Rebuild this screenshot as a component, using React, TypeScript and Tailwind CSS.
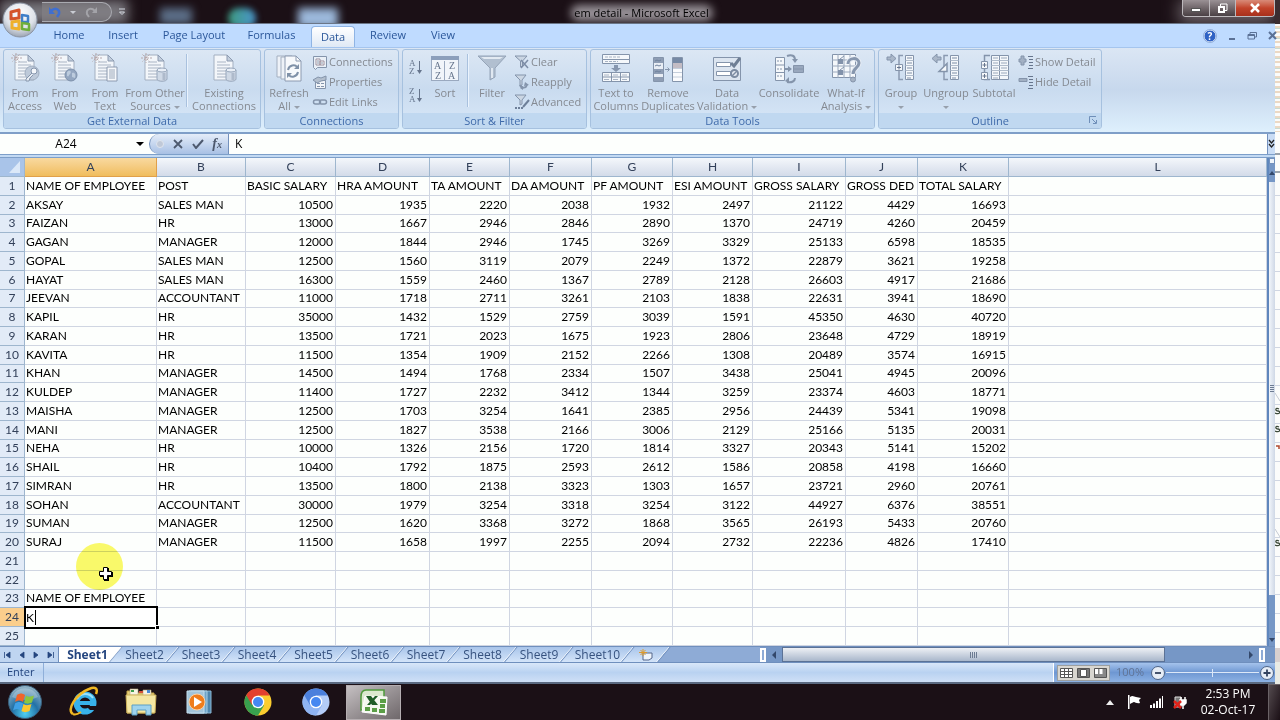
import type { ReactNode } from 'react';

const COLUMNS = [
  { id: 'A', width: 'w-[132px]' },
  { id: 'B', width: 'w-[89px]' },
  { id: 'C', width: 'w-[90px]' },
  { id: 'D', width: 'w-[94px]' },
  { id: 'E', width: 'w-[80px]' },
  { id: 'F', width: 'w-[82px]' },
  { id: 'G', width: 'w-[81px]' },
  { id: 'H', width: 'w-[80px]' },
  { id: 'I', width: 'w-[93px]' },
  { id: 'J', width: 'w-[72px]' },
  { id: 'K', width: 'w-[91px]' },
  { id: 'L', width: '' },
];

const ROWS: (string | number)[][] = [
  ['NAME OF EMPLOYEE', 'POST', 'BASIC SALARY', 'HRA AMOUNT', 'TA AMOUNT', 'DA AMOUNT', 'PF AMOUNT', 'ESI AMOUNT', 'GROSS SALARY', 'GROSS DED', 'TOTAL SALARY'],
  ['AKSAY', 'SALES MAN', 10500, 1935, 2220, 2038, 1932, 2497, 21122, 4429, 16693],
  ['FAIZAN', 'HR', 13000, 1667, 2946, 2846, 2890, 1370, 24719, 4260, 20459],
  ['GAGAN', 'MANAGER', 12000, 1844, 2946, 1745, 3269, 3329, 25133, 6598, 18535],
  ['GOPAL', 'SALES MAN', 12500, 1560, 3119, 2079, 2249, 1372, 22879, 3621, 19258],
  ['HAYAT', 'SALES MAN', 16300, 1559, 2460, 1367, 2789, 2128, 26603, 4917, 21686],
  ['JEEVAN', 'ACCOUNTANT', 11000, 1718, 2711, 3261, 2103, 1838, 22631, 3941, 18690],
  ['KAPIL', 'HR', 35000, 1432, 1529, 2759, 3039, 1591, 45350, 4630, 40720],
  ['KARAN', 'HR', 13500, 1721, 2023, 1675, 1923, 2806, 23648, 4729, 18919],
  ['KAVITA', 'HR', 11500, 1354, 1909, 2152, 2266, 1308, 20489, 3574, 16915],
  ['KHAN', 'MANAGER', 14500, 1494, 1768, 2334, 1507, 3438, 25041, 4945, 20096],
  ['KULDEP', 'MANAGER', 11400, 1727, 2232, 3412, 1344, 3259, 23374, 4603, 18771],
  ['MAISHA', 'MANAGER', 12500, 1703, 3254, 1641, 2385, 2956, 24439, 5341, 19098],
  ['MANI', 'MANAGER', 12500, 1827, 3538, 2166, 3006, 2129, 25166, 5135, 20031],
  ['NEHA', 'HR', 10000, 1326, 2156, 1720, 1814, 3327, 20343, 5141, 15202],
  ['SHAIL', 'HR', 10400, 1792, 1875, 2593, 2612, 1586, 20858, 4198, 16660],
  ['SIMRAN', 'HR', 13500, 1800, 2138, 3323, 1303, 1657, 23721, 2960, 20761],
  ['SOHAN', 'ACCOUNTANT', 30000, 1979, 3254, 3318, 3254, 3122, 44927, 6376, 38551],
  ['SUMAN', 'MANAGER', 12500, 1620, 3368, 3272, 1868, 3565, 26193, 5433, 20760],
  ['SURAJ', 'MANAGER', 11500, 1658, 1997, 2255, 2094, 2732, 22236, 4826, 17410],
  [],
  [],
  ['NAME OF EMPLOYEE'],
  ['K'],
  [],
];

const SHEETS = ['Sheet2', 'Sheet3', 'Sheet4', 'Sheet5', 'Sheet6', 'Sheet7', 'Sheet8', 'Sheet9'];

const INK = '#8494ab';

/* ---------- ribbon icons ---------- */

function Icon({ children, small }: { children: ReactNode; small?: boolean }) {
  return (
    <svg viewBox={small ? '0 0 16 16' : '0 0 32 32'} className={small ? 'w-4 h-4 shrink-0' : 'w-8 h-8 shrink-0'} fill="none" stroke={INK} strokeWidth="1">
      {children}
    </svg>
  );
}

function Sheet({ x = 6 }: { x?: number }) {
  return (
    <g>
      <path d={`M${x} 3h13l6 6v19h-19z`} fill="#f3f6fa" stroke="#a3afc0" />
      <path d={`M${x + 13} 3v6h6z`} fill="#c3cfde" stroke="#8c9ab0" />
      <path d={`M${x + 3} 10h9M${x + 3} 13h13M${x + 3} 16h13M${x + 3} 19h13M${x + 3} 22h13M${x + 3} 25h9`} stroke="#a9b4c4" />
    </g>
  );
}

function Spark() {
  return <path d="M7 1v10M2 6h11M3.500 2.500l7 7M10.500 2.500l-7 7" stroke="#b8a9ac" strokeDasharray="2 1" />;
}

function Cylinder() {
  return (
    <g>
      <path d="M18 18v9c0 3 10 3 10 0v-9" fill="#cfd9e6" stroke="#98a7bc" />
      <ellipse cx="23" cy="18" rx="5" ry="2" fill="#e9eff7" stroke="#98a7bc" />
      <path d="M25 21v7" stroke="#aebacb" strokeWidth="3" />
    </g>
  );
}

const AccessIcon = () => (
  <Icon>
    <Sheet /><Spark />
    <circle cx="23" cy="21" r="7" fill="#bdc9d9" stroke="#a0aec1" />
    <circle cx="25" cy="19" r="3" fill="#f4f7fb" stroke="#8595ac" />
    <path d="M23 21l-6 6v2h3l1-3 3-3" fill="#e8edf4" stroke="#8595ac" />
  </Icon>
);

const WebIcon = () => (
  <Icon>
    <Sheet /><Spark />
    <circle cx="22" cy="23" r="6" fill="#93a6c0" stroke="#7e91ac" />
    <path d="M18 20c3-3 5 0 3 2s-1 3-3 2zM23 21c3-1 4 2 3 5l-3-1z" fill="#bccbdd" stroke="none" />
  </Icon>
);

const TextIcon = () => (
  <Icon>
    <Sheet /><Spark />
    <path d="M18 15h10v14h-10z" fill="#f6f8fb" stroke="#8c9ab0" />
    <path d="M20 18h6M20 20h6M20 22h6M20 24h6M20 26h6" stroke="#9ba8ba" />
  </Icon>
);

const OtherIcon = () => <Icon><Sheet /><Spark /><Cylinder /></Icon>;
const ExistingIcon = () => <Icon><Sheet /><Cylinder /></Icon>;

const RefreshIcon = () => (
  <Icon>
    <path d="M4 4h15v21H4z" fill="#eef2f8" stroke="#a3afc0" />
    <path d="M8 5h15v22H8z" fill="#eef2f8" stroke="#a3afc0" />
    <path d="M12 4h11l5 5v20H12z" fill="#f7f9fc" stroke="#8c9ab0" />
    <path d="M23 4v5h5" stroke="#8c9ab0" />
    <path d="M15 18c1-5 7-6 9-3M25 20c-1 5-7 6-9 3" stroke="#7f91a8" strokeWidth="2" />
    <path d="M26 12v5h-5zM14 26v-5h5z" fill="#7f91a8" stroke="none" />
  </Icon>
);

const AzIcon = ({ top, bottom }: { top: string; bottom: string }) => (
  <svg viewBox="0 0 16 18" className="w-4 h-[18px]" fontFamily="Liberation Serif, serif" fontSize="9" fill="#66758d">
    <text x="1" y="8">{top}</text>
    <text x="1" y="16">{bottom}</text>
    <path d="M11.500 3v12" stroke="#66758d" />
    <path d="M9 12h5l-2.500 4z" />
  </svg>
);

const SortIcon = () => (
  <svg viewBox="0 0 32 32" className="w-8 h-8" fontFamily="Liberation Serif, serif" fontSize="10" fill="#66758d">
    <rect x="2.500" y="4.500" width="27" height="24" fill="#f1f5fa" stroke="#9aa9bf" />
    <rect x="2" y="4" width="28" height="4" fill="#8c9fbb" />
    <path d="M15.500 9v19" stroke="#9aa9bf" />
    <text x="5" y="17">A</text><text x="6" y="27">Z</text>
    <text x="20" y="17">Z</text><text x="19" y="27">A</text>
  </svg>
);

const FilterIcon = () => (
  <Icon>
    <path d="M2 4h28L19 16v9l-5 3V16z" fill="#b1bfd0" stroke="#95a4b8" />
    <path d="M5 5h22l-3 2H8z" fill="#e3eaf2" stroke="none" />
    <path d="M16 16v10" stroke="#e0e8f1" strokeWidth="2" />
  </Icon>
);

const ConnectionsIcon = () => (
  <Icon small>
    <path d="M1.500 2.500h13v11h-9l-2 2-2-2z" fill="#eaf0f7" />
    <path d="M4 5h4v6H4zM8 7h4v4H8z" fill="#fff" stroke="#9b8f9c" />
    <path d="M5 7h2M5 9h2M9 9h2" />
  </Icon>
);

const PropertiesIcon = () => (
  <Icon small>
    <path d="M3.500 6.500h10v8h-10z" fill="#f2f5f9" />
    <path d="M5 9.500h3M5 12.500h3M9 9.500h3M9 12.500h3" />
    <path d="M1 6l5-3 3 1 5-2v4l-5 1-4 2z" fill="#b3bfce" />
  </Icon>
);

const LinksIcon = () => (
  <Icon small>
    <rect x="1.500" y="6" width="7" height="4" rx="2" strokeWidth="1.500" />
    <rect x="7.500" y="6" width="7" height="4" rx="2" strokeWidth="1.500" />
  </Icon>
);

const ClearIcon = () => (
  <Icon small>
    <path d="M1 2h12L8.500 7v5l-2 1V7z" fill="#cbd6e3" />
    <path d="M7 6l7 8M14 6l-7 8" stroke="#7c8ca5" strokeWidth="1.500" />
  </Icon>
);

const ReapplyIcon = () => (
  <Icon small>
    <path d="M1 1h11L8 6v5l-2 1V6z" fill="#cbd6e3" />
    <path d="M6 11c2 4 6 3 7 0" strokeWidth="2" />
    <path d="M11 8l4 3-5 1zM9 12v4l-3-2z" fill={INK} stroke="none" />
  </Icon>
);

const AdvancedIcon = () => (
  <Icon small>
    <path d="M1 1h11L8 6v4l-2 1V6z" fill="#cbd6e3" />
    <path d="M1 14h8" stroke="#6d7f99" strokeWidth="2" strokeDasharray="2 1" />
    <path d="M9 13l6-7" stroke="#6d7f99" strokeWidth="2" />
  </Icon>
);

const TextToColumnsIcon = () => (
  <Icon>
    <path d="M2.500 2.500h27v5h-27zM2.500 7.500h27v4h-27z" fill="#f5f8fb" />
    <path d="M5 5h16M5 9.500h13" stroke="#a9b4c4" strokeDasharray="3 1" />
    <path d="M14 13h4v3h3l-5 4-5-4h3z" fill="#8797af" stroke="none" />
    <path d="M2.500 20.500h27v9h-27zM2.500 25h27M11.500 20.500v9M20.500 20.500v9" fill="#f5f8fb" />
    <path d="M4 23h5M13 23h5M22 23h5M4 27.500h5M13 27.500h5M22 27.500h5" stroke="#a9b4c4" />
  </Icon>
);

const RemoveDuplicatesIcon = () => (
  <Icon>
    <path d="M1.500 5.500h10v24h-10z" fill="#e8edf4" />
    <path d="M2 6h9v5H2zM2 17h9v5H2zM2 25h9v4H2z" fill="#8e9db4" stroke="none" />
    <path d="M3 9l2-1 2 1 2-1M3 14l2-1 2 1 2-1M3 20l2-1 2 1 2-1" stroke="#6f819c" />
    <path d="M13 17.500h4M15.500 15.500l2 2-2 2" />
    <path d="M20.500 5.500h10v24h-10z" fill="#fafbfd" />
    <path d="M21 6h9v5h-9z" fill="#7689a5" stroke="none" />
    <path d="M21 11h9v5h-9z" fill="#c3bcc4" stroke="none" />
    <path d="M21 16.500h9M21 20.500h9M21 25h9" stroke="#c4cedb" />
  </Icon>
);

const ValidationIcon = () => (
  <Icon>
    <path d="M2.500 5.500h27v23h-27z" fill="#dce5f0" />
    <path d="M5.500 10.500h14v4h-14zM5.500 19.500h14v4h-14z" fill="#fff" />
    <path d="M20 11l3 3 6-8" stroke="#6f7f95" strokeWidth="3" />
    <circle cx="23.500" cy="21.500" r="3.500" stroke="#7d8ca2" strokeWidth="2" fill="#e4e9f1" />
    <path d="M21 24l5-5" stroke="#7d8ca2" strokeWidth="1.500" />
  </Icon>
);

const ConsolidateIcon = () => (
  <Icon>
    <path d="M2.500 5.500h9v23h-9zM2.500 13h9M2.500 20.500h9" fill="#f5f8fb" />
    <path d="M4 9h6M4 17h6M4 24h6" strokeDasharray="2 1" />
    <path d="M14 4c5-2 8 0 8 4M14 30c5 1 8-1 8-4" strokeWidth="2" />
    <path d="M19 7h6l-3 4zM12 29l4-4v6z" fill={INK} stroke="none" />
    <path d="M12 16h3v-2l4 3-4 3v-2h-3z" fill={INK} stroke="none" />
    <path d="M20.500 13.500h10v7h-10zM20.500 17h10" fill="#98a7bd" />
  </Icon>
);

const WhatIfIcon = () => (
  <Icon>
    <path d="M2.500 2.500h23v23h-23z" fill="#f5f8fb" />
    <path d="M8 2v24M14 2v24M20 2v24M2 8h24M2 14h24M2 20h24" stroke="#9aa8bc" />
    <path d="M8 7h5v5H8zM8 18h5v5H8z" fill="#8292aa" stroke="none" />
    <path d="M10 7l4-3M10 18l4-3" />
    <path d="M18 12c0-7 11-7 11-1 0 5-6 5-6 11" stroke="#e5ebf3" strokeWidth="5" />
    <path d="M18 12c0-7 11-7 11-1 0 5-6 5-6 11" stroke="#8797ae" strokeWidth="3" />
    <circle cx="23" cy="27.500" r="2.500" fill="#a5b2c4" />
  </Icon>
);

function OutlineRows() {
  return (
    <g>
      <path d="M20.500 3.500h8v24h-8z" fill="#f5f8fb" />
      <path d="M20.500 8.500h8M20.500 13.500h8M20.500 18.500h8M20.500 23.500h8" stroke="#b0bccb" />
      <path d="M22 6h5M22 11h5M22 16h5M22 21h5M22 26h4" stroke="#7d8da5" />
      <path d="M18 3.500h-4v24h4" stroke="#8b9ab1" strokeWidth="1.500" />
    </g>
  );
}

const GroupIcon = () => (
  <Icon>
    <OutlineRows />
    <path d="M2 5h4V2l5 4.500L6 11V8H2z" fill="#aab7c8" />
    <path d="M10.500 12.500h7v6h-7z" fill="#f5f8fb" />
    <path d="M12 15.500h4M14 13.500v4" stroke="#66758d" />
  </Icon>
);

const UngroupIcon = () => (
  <Icon>
    <OutlineRows />
    <path d="M11 5H7V2L2 6.500 7 11V8h4z" fill="#aab7c8" />
    <path d="M9 19.500h8v-8z" fill="#f5f8fb" strokeWidth="1.500" />
  </Icon>
);

const SubtotalIcon = () => (
  <Icon>
    <path d="M13.500 3.500h17v24h-17zM21.500 3.500v24" fill="#f5f8fb" />
    <path d="M13.500 8.500h17M13.500 13.500h17M13.500 18.500h17M13.500 23.500h17" stroke="#b0bccb" />
    <path d="M15 6h5M15 11h5M15 16h5M15 21h5M15 26h5M23 6h6M23 11h6M23 16h6M23 21h6" stroke="#9aa8bb" />
    <path d="M12 3.500H6.500v24H12" strokeWidth="1.500" />
    <path d="M3.500 9.500h6v7h-6zM3.500 20.500h6v7h-6z" fill="#f5f8fb" />
    <path d="M4.500 13h4M6.500 11v4M4.500 24h4M6.500 22v4" stroke="#66758d" />
  </Icon>
);

const DetailIcon = ({ plus }: { plus?: boolean }) => (
  <Icon small>
    {plus ? <path d="M1 5h2V2h3v3h2v3H6v3H3V8H1z" fill="#a2b0c3" /> : <path d="M1 4.500h8v3H1z" fill="#a2b0c3" />}
    <path d="M10 2.500h5M11 5.500h4M11 8.500h4M11 11.500h4M10 14.500h5" stroke="#66758d" />
  </Icon>
);

/* ---------- ribbon parts ---------- */

const Arrow = () => <span className="inline-block border-x-3 border-t-3 border-x-transparent border-t-[#97a0ac] align-middle" />;

type BigProps = { icon: ReactNode; lines: string[]; width: string; arrow?: boolean };

function BigButton({ icon, lines, width, arrow }: BigProps) {
  return (
    <button className={`${width} flex flex-col items-center shrink-0 whitespace-nowrap`}>
      {icon}
      <span className="mt-0.5 text-center leading-[13px]">
        {lines.map((line, i) => (
          <span key={line} className="block">
            {line}
            {arrow && lines.length > 1 && i === lines.length - 1 && <> <Arrow /></>}
          </span>
        ))}
        {arrow && lines.length === 1 && <span className="block"><Arrow /></span>}
      </span>
    </button>
  );
}

function SmallButton({ icon, label }: { icon: ReactNode; label: string }) {
  return (
    <button className="flex items-center gap-px h-5 whitespace-nowrap">
      {icon}
      <span>{label}</span>
    </button>
  );
}

const Divider = () => <span className="w-0.5 h-[53px] mt-0.5 mx-px border-l border-[#a9c1de] bg-[#eaf3fd] shrink-0" />;

function Group({ title, children, width, launcher }: { title: string; children: ReactNode; width: string; launcher?: boolean }) {
  return (
    <section className={`${width} relative flex flex-col shrink-0 h-20 rounded-[3px] border border-[#a6c1df] bg-linear-to-b from-[#dce7f4] via-[#c9dbef] to-[#d9e8f8] overflow-hidden`}>
      <div className="flex flex-1 pl-px pt-0.5">{children}</div>
      <h2 className="h-[15px] bg-[#c0d8f0] text-[#3e6aaa] text-center leading-[15px]">{title}</h2>
      {launcher && (
        <button aria-label="Outline settings" className="absolute right-1 bottom-1">
          <svg viewBox="0 0 8 8" className="w-2 h-2" fill="none" stroke="#6f8fb9">
            <path d="M.5 7V.5H7M3 3l4 4M7.500 4v3.500H4" />
          </svg>
        </button>
      )}
    </section>
  );
}

function Ribbon() {
  return (
    <div className="flex gap-[3px] h-[87px] pl-[3px] pt-px text-[11px] text-[#858a92] border-t border-[#a5c5ee] border-b-2 border-b-[#7f9fc8] bg-linear-to-b from-[#dbe6f4] via-[#c7d8ed] to-[#def0fd] overflow-hidden">
      <Group title="Get External Data" width="w-[258px]">
        <BigButton icon={<AccessIcon />} lines={['From', 'Access']} width="w-10" />
        <BigButton icon={<WebIcon />} lines={['From', 'Web']} width="w-10" />
        <BigButton icon={<TextIcon />} lines={['From', 'Text']} width="w-10" />
        <BigButton icon={<OtherIcon />} lines={['From Other', 'Sources']} width="w-[60px]" arrow />
        <Divider />
        <BigButton icon={<ExistingIcon />} lines={['Existing', 'Connections']} width="w-[70px]" />
      </Group>
      <Group title="Connections" width="w-[135px]">
        <BigButton icon={<RefreshIcon />} lines={['Refresh', 'All']} width="w-[46px]" arrow />
        <div className="flex flex-col">
          <SmallButton icon={<ConnectionsIcon />} label="Connections" />
          <SmallButton icon={<PropertiesIcon />} label="Properties" />
          <SmallButton icon={<LinksIcon />} label="Edit Links" />
        </div>
      </Group>
      <Group title="Sort & Filter" width="w-[185px]">
        <div className="flex flex-col gap-2.5 w-5 pl-1 pt-1.5">
          <button aria-label="Sort A to Z"><AzIcon top="A" bottom="Z" /></button>
          <button aria-label="Sort Z to A"><AzIcon top="Z" bottom="A" /></button>
        </div>
        <BigButton icon={<SortIcon />} lines={['Sort']} width="w-[42px]" />
        <Divider />
        <BigButton icon={<FilterIcon />} lines={['Filter']} width="w-[44px]" />
        <div className="flex flex-col">
          <SmallButton icon={<ClearIcon />} label="Clear" />
          <SmallButton icon={<ReapplyIcon />} label="Reapply" />
          <SmallButton icon={<AdvancedIcon />} label="Advanced" />
        </div>
      </Group>
      <Group title="Data Tools" width="w-[285px]">
        <BigButton icon={<TextToColumnsIcon />} lines={['Text to', 'Columns']} width="w-12" />
        <BigButton icon={<RemoveDuplicatesIcon />} lines={['Remove', 'Duplicates']} width="w-14" />
        <BigButton icon={<ValidationIcon />} lines={['Data', 'Validation']} width="w-[62px]" arrow />
        <BigButton icon={<ConsolidateIcon />} lines={['Consolidate']} width="w-[62px]" />
        <BigButton icon={<WhatIfIcon />} lines={['What-If', 'Analysis']} width="w-[52px]" arrow />
      </Group>
      <Group title="Outline" width="w-[224px]" launcher>
        <BigButton icon={<GroupIcon />} lines={['Group']} width="w-[42px]" arrow />
        <BigButton icon={<UngroupIcon />} lines={['Ungroup']} width="w-12" arrow />
        <BigButton icon={<SubtotalIcon />} lines={['Subtotal']} width="w-12" />
        <div className="flex flex-col">
          <SmallButton icon={<DetailIcon plus />} label="Show Detail" />
          <SmallButton icon={<DetailIcon />} label="Hide Detail" />
        </div>
      </Group>
    </div>
  );
}

/* ---------- window chrome ---------- */

function OfficeButton() {
  return (
    <button aria-label="Office" className="absolute left-[2px] top-[2px] z-10">
      <svg viewBox="0 0 36 36" className="w-9 h-9">
        <defs>
          <radialGradient id="orb" cx=".5" cy=".3" r=".75">
            <stop offset="0" stopColor="#ffffff" />
            <stop offset=".6" stopColor="#dde1e8" />
            <stop offset="1" stopColor="#8e98a8" />
          </radialGradient>
        </defs>
        <circle cx="18" cy="18" r="17" fill="url(#orb)" stroke="#8b94a3" />
        <g fill="none" strokeWidth="3" strokeLinejoin="round">
          <path d="M9 10l8-2v8l-8 1z" stroke="#d4542a" />
          <path d="M20 13l6 1v6h-6z" stroke="#3f7fc9" strokeWidth="2.500" />
          <path d="M10 20l7-1v8l-7-1z" stroke="#eeb02b" />
          <path d="M20 21l7 1v6l-7-1z" stroke="#6fae3b" strokeWidth="2.500" />
        </g>
      </svg>
    </button>
  );
}

function TitleBar() {
  return (
    <header className="relative flex items-start h-6 border-b border-[#6b7687] bg-[#1b1016] overflow-hidden">
      <div className="absolute inset-0 pointer-events-none">
        <span className="absolute left-0 top-0 w-32 h-6 bg-[#77757b] blur-[6px]" />
        <span className="absolute left-[160px] top-2 w-8 h-4 bg-[#5c6f88] blur-xs" />
        <span className="absolute left-[228px] top-2 w-7 h-5 rounded-full bg-linear-to-r from-[#3f9b7c] to-[#4b93cc] blur-[3px]" />
        <span className="absolute left-[298px] top-2 w-10 h-5 bg-[#9cb9dc] blur-xs" />
        <span className="absolute right-0 top-0 w-24 h-6 bg-[#6b6268] blur-[8px]" />
      </div>
      <div className="relative flex items-center gap-2 h-5 w-[70px] ml-[42px] mt-0.5 pl-1.5 rounded-r-full border border-[#a9aab0] border-l-0 bg-[#858489]/60">
        <button aria-label="Undo">
          <svg viewBox="0 0 14 12" className="w-3.5 h-3" fill="none">
            <path d="M3 5c4-4 9-2 8 3l-2 3" stroke="#3f6fd0" strokeWidth="2.500" />
            <path d="M1 1v7h6z" fill="#3f6fd0" />
          </svg>
        </button>
        <span className="border-x-3 border-t-3 border-x-transparent border-t-[#c9ccd3]" />
        <button aria-label="Redo">
          <svg viewBox="0 0 14 12" className="w-3.5 h-3" fill="none">
            <path d="M11 5C7 1 2 3 3 8l2 3" stroke="#a3a3a8" strokeWidth="2" />
            <path d="M13 1v6H8z" fill="#a3a3a8" />
          </svg>
        </button>
      </div>
      <button aria-label="Customize quick access" className="relative ml-1.5 mt-2">
        <svg viewBox="0 0 8 8" className="w-2 h-2"><path d="M1 1h6M1.500 4h5L4 6.500z" stroke="#d5dae2" fill="none" /></svg>
      </button>
      <h1 className="absolute left-1/2 top-1 ml-1 -translate-x-1/2 px-1 text-[11px] leading-[18px] text-black whitespace-nowrap">
        <span className="absolute inset-x-0 inset-y-px rounded-full bg-[#979197] blur-xs" />
        <span className="relative">em detail - Microsoft Excel</span>
      </h1>
      <div className="relative flex h-[17px] ml-auto rounded-b-sm border border-t-0 border-[#bdb9bd] overflow-hidden">
        <button aria-label="Minimize" className="w-[26px] flex items-center justify-center bg-linear-to-b from-[#9a9195] to-[#4a4044]">
          <span className="w-2.5 h-1 mt-1 bg-white border border-[#555]" />
        </button>
        <button aria-label="Restore" className="w-[26px] flex items-center justify-center border-l border-[#bdb9bd] bg-linear-to-b from-[#9a9195] to-[#4a4044]">
          <svg viewBox="0 0 11 11" className="w-[11px] h-[11px]" fill="none" stroke="#fff"><path d="M3.500 3V1h6.500v6.500H8" /><path d="M2 4h5v5H2z" strokeWidth="2" /></svg>
        </button>
        <button aria-label="Close" className="w-[39px] flex items-center justify-center border-l border-[#bdb9bd] bg-linear-to-b from-[#d88a78] via-[#c2432a] to-[#a8301c]">
          <svg viewBox="0 0 12 10" className="w-3 h-2.5"><path d="M2 1l8 8M10 1L2 9" stroke="#fff" strokeWidth="2.500" /></svg>
        </button>
      </div>
    </header>
  );
}

function RibbonTabs() {
  return (
    <nav className="flex h-[23px] pl-12 text-[11px] font-medium text-[#2b579a] bg-[#bfdbff]">
      <button className="w-[42px]">Home</button>
      <button className="w-[66px]">Insert</button>
      <button className="w-[76px]">Page Layout</button>
      <button className="w-[79px]">Formulas</button>
      <button className="w-11 mt-0.5 rounded-t border border-b-0 border-[#8fb4e4] bg-linear-to-b from-white to-[#dfe9f5]">Data</button>
      <button className="w-[66px]">Review</button>
      <button className="w-11">View</button>
      <div className="flex items-center gap-2.5 ml-auto -mr-0.5 text-[#5b7196]">
        <button aria-label="Help">
          <svg viewBox="0 0 14 14" className="w-3.5 h-3.5">
            <circle cx="7" cy="7" r="6" fill="#2f62c4" stroke="#dfe9f8" />
            <circle cx="7" cy="7" r="6.500" fill="none" stroke="#6f8fc6" strokeWidth=".6" />
            <text x="7" y="10.500" fontSize="10" fontWeight="700" fill="#fff" textAnchor="middle">?</text>
          </svg>
        </button>
        <button aria-label="Minimize workbook"><svg viewBox="0 0 10 10" className="w-2.5 h-2.5"><path d="M2 8h6" stroke="#5b7196" strokeWidth="2" /></svg></button>
        <button aria-label="Restore workbook"><svg viewBox="0 0 10 10" className="w-2.5 h-2.5" fill="none" stroke="#5b7196"><path d="M3 3V1.500h6.500V6H8" /><path d="M1 3.500h6.500V8H1zM1 4.500h6" /></svg></button>
        <button aria-label="Close workbook"><svg viewBox="0 0 10 10" className="w-2.5 h-2.5"><path d="M2 1l7 7M9 1L2 8" stroke="#5b7196" strokeWidth="2" /></svg></button>
      </div>
    </nav>
  );
}

function FormulaBar() {
  return (
    <div className="flex h-[21px] mb-0.5 border-b border-[#7d9fc9] bg-[#fdfffd] text-xs">
      <div className="flex items-center w-[149px]">
        <input aria-label="Name Box" defaultValue="A24" className="w-[132px] min-w-0 text-center bg-transparent outline-none" />
        <button aria-label="Name list" className="ml-1 border-x-4 border-t-4 border-x-transparent border-t-black" />
      </div>
      <div className="flex items-center justify-between w-20 pl-1.5 pr-1.5 rounded-l-full border-l border-r border-[#7391bd] bg-linear-to-b from-[#e4edf9] to-[#a8c0e4]">
        <span className="w-2 h-2 rounded-full bg-[#c0c9d8] border border-[#dfe5ee]" />
        <button aria-label="Cancel"><svg viewBox="0 0 10 10" className="w-2.5 h-2.5"><path d="M1 1l8 8M9 1L1 9" stroke="#4d596e" strokeWidth="1.800" /></svg></button>
        <button aria-label="Enter"><svg viewBox="0 0 12 10" className="w-3 h-2.5"><path d="M1 5l3 4 7-8" fill="none" stroke="#4d596e" strokeWidth="2" /></svg></button>
        <button aria-label="Insert Function" className="font-[Liberation_Serif,serif] italic font-bold text-sm leading-4 text-[#4d596e]">f<span className="text-[10px]">x</span></button>
      </div>
      <input aria-label="Formula" defaultValue="K" className="flex-1 min-w-0 pl-1.5 bg-transparent outline-none" />
      <button aria-label="Expand formula bar" className="w-2 flex items-center justify-center border-l border-[#7391bd] bg-[#c9dcf5]">
        <svg viewBox="0 0 7 10" className="w-[7px] h-2.5" fill="none" stroke="#222" strokeWidth="1.300"><path d="M1 1l2.500 3L6 1M1 5l2.500 3L6 5" /></svg>
      </button>
    </div>
  );
}

/* ---------- worksheet ---------- */

function Cell({ value, row, col }: { value?: string | number; row: number; col: number }) {
  const active = row === 23 && col === 0;
  if (active) {
    return (
      <td className="relative p-0 bg-white">
        <input aria-label="A24" defaultValue={value} className="absolute inset-0 w-full pl-px bg-transparent outline-none" />
        <span className="absolute left-2.5 top-0.5 bottom-0.5 w-px bg-black" />
        <span className="absolute -left-px -right-px -top-1 bottom-0 translate-y-0.5 border-2 border-black pointer-events-none" />
        <span className="absolute -right-0.5 -bottom-0.5 w-1 h-1 bg-black border-t border-l border-white" />
      </td>
    );
  }
  return (
    <td className={`py-0 pl-px pr-0.5 border-r border-b border-[#d0d6e2] whitespace-nowrap ${typeof value === 'number' ? 'text-right' : ''}`}>
      {value}
    </td>
  );
}

function headerStyle(id: string) {
  if (id === 'A') return 'border-[#e0a04a] bg-linear-to-b from-[#f9d99f] to-[#f0bd5c]';
  return 'border-[#9eb6ce] bg-linear-to-b from-[#f4f7fb] to-[#d3dbe9]';
}

function Worksheet() {
  return (
    <div className="relative flex-1 min-h-0 flex border-t border-[#7d9fc9]">
      <div className="flex-1 min-w-0 h-full">
        <table className="w-full h-full table-fixed border-separate border-spacing-0 bg-[#fdfffd] font-[Lato,sans-serif] text-xs leading-4 text-black">
          <colgroup>
            <col className="w-[25px]" />
            {COLUMNS.map((c) => <col key={c.id} className={c.width} />)}
          </colgroup>
          <thead>
            <tr>
              <th aria-label="Select all" className="p-0 border-r border-b border-[#9eb6ce] bg-[#a9c4e9]">
                <svg viewBox="0 0 24 18" className="w-full h-[18px]"><path d="M20 3v12H9z" fill="#dbe8f8" /></svg>
              </th>
              {COLUMNS.map((c) => (
                <th
                  key={c.id}
                  scope="col"
                  className={`py-0 pr-0 font-normal text-[#33415a] border-r border-b ${c.id === 'L' ? 'pl-10' : 'pl-0'} ${headerStyle(c.id)}`}
                >
                  {c.id}
                </th>
              ))}
            </tr>
          </thead>
          <tbody>
            {ROWS.map((row, r) => (
              <tr key={r}>
                <th scope="row" className={`p-0 font-normal text-center text-[#33415a] border-r border-b border-[#9eb6ce] ${r === 23 ? 'bg-[#fbce8c]' : 'bg-[#e2ebf7]'}`}>
                  {r + 1}
                </th>
                {COLUMNS.map((c, i) => <Cell key={c.id} value={row[i]} row={r} col={i} />)}
              </tr>
            ))}
          </tbody>
        </table>
      </div>
      <div className="w-2 flex flex-col border-l-2 border-[#5f87bd] bg-[#7697c6]">
        <span className="h-1.5 bg-[#eef4fb] border border-[#7391bd]" />
        <span className="h-[18px] flex items-center"><span className="border-x-3 border-b-4 border-x-transparent border-b-[#33486b]" /></span>
        <span className="flex-1 flex flex-col items-center justify-center gap-px bg-linear-to-r from-[#f2f6fb] to-[#cfd8e6]">
          <i className="w-1 h-px bg-[#6c7b92]" /><i className="w-1 h-px bg-[#6c7b92]" /><i className="w-1 h-px bg-[#6c7b92]" /><i className="w-1 h-px bg-[#6c7b92]" />
        </span>
        <span className="h-[51px] flex items-end pb-1"><span className="border-x-3 border-t-4 border-x-transparent border-t-[#33486b]" /></span>
      </div>
      {/* pointer highlight */}
      <div className="absolute left-[76px] top-[385px] w-[47px] h-[47px] rounded-full bg-[#fbf96b] mix-blend-multiply pointer-events-none" />
      <svg viewBox="0 0 16 16" className="absolute left-[98px] top-[408px] w-4 h-4 pointer-events-none">
        <path d="M6 2h5v4h4v5h-4v4H6v-4H2V6h4z" fill="#000" />
        <path d="M5.500 1.500h4v4h4v4h-4v4h-4v-4h-4v-4h4z" fill="#fff" stroke="#000" />
      </svg>
    </div>
  );
}

function SheetTab({ name, width }: { name: ReactNode; width: string }) {
  return (
    <button className={`${width} relative h-4`}>
      <span className="absolute inset-0 -skew-x-[40deg] border-r border-[#6f8fbd] bg-linear-to-b from-[#a9c5ea] to-[#d6e6fa] shadow-[inset_-1px_0_#fff]" />
      <span className="relative flex items-center justify-center h-4">{name}</span>
    </button>
  );
}

function SheetBar() {
  return (
    <div className="flex items-center h-[17px] text-xs text-[#36527f] border-y border-[#6f8fbd] bg-[#8eabd6] overflow-hidden">
      <div className="relative z-10 flex items-center justify-around w-[59px] h-full border-r border-[#6f8fbd] bg-[#bfd5f1]">
        {['M1.500 1v6M7 1v6L3 4z', 'M6 1v6L2 4z', 'M2 1v6l4-3z', 'M6.500 1v6M1 1v6l4-3z'].map((d, i) => (
          <button key={d} aria-label={['First sheet', 'Previous sheet', 'Next sheet', 'Last sheet'][i]}>
            <svg viewBox="0 0 8 8" className="w-2 h-2"><path d={d} fill="#24457f" stroke="#24457f" strokeWidth=".8" /></svg>
          </button>
        ))}
      </div>
      <button className="relative w-[57px] h-4 font-bold text-[#24457f]">
        <span className="absolute inset-y-0 right-0 -left-4 -skew-x-[40deg] border-r border-[#6f8fbd] bg-white" />
        <span className="relative">Sheet1</span>
      </button>
      {SHEETS.map((s, i) => <SheetTab key={s} name={s} width={i % 3 ? 'w-14' : 'w-[57px]'} />)}
      <SheetTab name="Sheet10" width="w-[61px]" />
      <SheetTab
        width="w-9"
        name={
          <svg viewBox="0 0 15 12" className="w-[15px] h-3" fill="none">
            <path d="M4 4h9v5l-3 2H4z" fill="#eef4fb" stroke="#54678a" />
            <path d="M4 0v7M0 3.500h8M1.500 1l5 5M6.500 1l-5 5" stroke="#dd9a2c" />
          </svg>
        }
      />
      <div className="flex flex-1 items-center h-full ml-[96px] bg-[#7697c6]">
        <span className="w-1.5 h-3.5 border-2 border-white bg-[#8eabd6]" />
        <span className="ml-1.5 mr-1.5 border-y-4 border-r-4 border-y-transparent border-r-[#33486b]" />
        <span className="flex items-center justify-center gap-px w-[383px] h-full border border-[#5b7296] bg-linear-to-b from-[#eef1f5] to-[#a9b7cb]">
          <i className="w-px h-1.5 bg-[#6c7b92]" /><i className="w-px h-1.5 bg-[#6c7b92]" /><i className="w-px h-1.5 bg-[#6c7b92]" /><i className="w-px h-1.5 bg-[#6c7b92]" />
        </span>
        <span className="ml-auto border-y-4 border-l-4 border-y-transparent border-l-[#33486b]" />
        <span className="mr-2.5 ml-1.5 w-1.5 h-3.5 border-2 border-white bg-[#8eabd6]" />
      </div>
    </div>
  );
}

function ZoomButton({ label, d }: { label: string; d: string }) {
  return (
    <button aria-label={label} className="shrink-0">
      <svg viewBox="0 0 16 16" className="w-4 h-4"><circle cx="8" cy="8" r="6.500" fill="#e6edf6" stroke="#4d6488" /><path d={d} stroke="#33435f" strokeWidth="1.800" /></svg>
    </button>
  );
}

function StatusBar() {
  return (
    <footer className="flex items-stretch h-[21px] text-[11px] text-[#24457f] border-b-2 border-[#5a6980] bg-linear-to-b from-[#d9e7f9] via-[#b9d2f1] to-[#cfe0f6] overflow-hidden">
      <div className="flex items-center w-11 pl-[7px] border-r border-[#8fafd9]">Enter</div>
      <div className="flex items-center ml-auto w-[222px] pl-[3px] border-l border-white bg-linear-to-b from-[#a5c3ec] via-[#6e97d2] to-[#8db2e4]">
        <div className="flex items-center h-4 border border-[#9c9fa0] bg-[#d8d6d0]">
          <button aria-label="Normal view" className="px-[2px]"><svg viewBox="0 0 13 10" className="w-[13px] h-2.5" fill="#fff" stroke="#555"><path d="M.5.5h12v9H.5zM.5 3.500h12M.5 6.500h12M4.500.5v9M8.500.5v9" /></svg></button>
          <button aria-label="Page layout view" className="px-[2px]"><svg viewBox="0 0 13 10" className="w-[13px] h-2.5" fill="#777" stroke="#555"><path d="M.5.5h12v9H.5z" /><path d="M3.500 1.500h6v7h-6z" fill="#fff" /></svg></button>
          <button aria-label="Page break view" className="px-[2px]"><svg viewBox="0 0 13 10" className="w-[13px] h-2.5" fill="#888" stroke="#555"><path d="M.5.5h12v9H.5z" /><path d="M1 1h3v5H1zM5.500 1h3v5h-3z" fill="#fff" stroke="none" /></svg></button>
        </div>
        <button className="w-10 text-[#5f7395]">100%</button>
        <ZoomButton label="Zoom out" d="M5 8h6" />
        <div className="flex flex-1 items-center min-w-0">
          <input type="range" aria-label="Zoom" defaultValue={50} className="w-full h-px appearance-none bg-[#dce8f8] [&::-webkit-slider-thumb]:appearance-none [&::-webkit-slider-thumb]:w-px [&::-webkit-slider-thumb]:h-2 [&::-webkit-slider-thumb]:bg-[#dce8f8]" />
        </div>
        <ZoomButton label="Zoom in" d="M4.500 8h7M8 4.500v7" />
      </div>
    </footer>
  );
}

// sliver of the window lying behind the workbook
function BackgroundEdge() {
  return (
    <svg viewBox="0 0 5 684" preserveAspectRatio="none" className="w-[5px] h-full" fill="none">
      <path d="M0 0h5v684H0z" fill="#fbfcfb" />
      <path d="M0 0h5v24H0z" fill="#3a2d31" />
      <path d="M2.500 26v106" stroke="#ecd9c4" strokeWidth="5" strokeDasharray="2 3" />
      <path d="M2.500 28v106" stroke="#c9dcd2" strokeWidth="5" strokeDasharray="1 9" />
      <path d="M0 154h5M0 172h5" stroke="#9aa3ad" strokeWidth="2" />
      <path d="M2.500 195v450" stroke="#d0d6e2" strokeWidth="5" strokeDasharray="1 18" />
      <path d="M4 409c-4-2-4 2-1 2s2 4-3 2M4 427c-4-2-4 2-1 2s2 4-3 2M4 541c-4-2-4 2-1 2s2 4-3 2" stroke="#3c4a3a" strokeWidth="1.300" />
      <path d="M1 446h3v3" stroke="#b3492f" strokeWidth="1.500" />
      <path d="M0 393l5 8M0 529l5 8" stroke="#c5cad3" />
      <path d="M0 648h5v14H0z" fill="#d8d0cf" />
      <path d="M0 662h5v22H0z" fill="#e9ebe4" />
    </svg>
  );
}

/* ---------- taskbar ---------- */

function StartOrb() {
  return (
    <svg viewBox="0 0 36 36" className="w-9 h-9">
      <defs>
        <radialGradient id="start" cx=".5" cy=".85" r=".8">
          <stop offset="0" stopColor="#4fd0f2" />
          <stop offset=".5" stopColor="#2371a6" />
          <stop offset="1" stopColor="#8fb2c6" />
        </radialGradient>
      </defs>
      <circle cx="18" cy="18" r="16.500" fill="url(#start)" stroke="#3a5d78" />
      <path d="M5 13a14 14 0 0 1 26 0c-8 4-18 4-26 0z" fill="#fff" opacity=".25" />
      <path d="M10 11c3-2 5-2 8 0l-2 7c-3-2-5-2-8 0z" fill="#f0642b" />
      <path d="M19 11.500c3 2 5 1 8 0l-2 7c-3 1-5 2-8 0z" fill="#8cc63f" />
      <path d="M8 19.500c3-2 5-2 8 0l-2 7c-3-2-5-2-8 0z" fill="#3fa0e6" />
      <path d="M16.500 20c3 2 5 1 8 0l-2 7c-3 1-5 2-8 0z" fill="#fbc72e" />
    </svg>
  );
}

function IeLogo() {
  return (
    <svg viewBox="0 0 32 32" className="w-8 h-8" fill="none">
      <circle cx="17" cy="17" r="8.500" stroke="#38b2ea" strokeWidth="6" />
      <path d="M9 17h16" stroke="#38b2ea" strokeWidth="4" />
      <path d="M18 20h12v4h-8z" fill="#1b1016" />
      <path d="M9 13c3-6 12-7 16-1" stroke="#9be0fa" strokeWidth="2" />
      <path d="M5 28C-2 24 8 8 21 3c7-3 9 0 7 5" stroke="#f0b722" strokeWidth="2.500" />
      <path d="M5 28c2 1 5 0 8-2" stroke="#f0b722" strokeWidth="2" />
    </svg>
  );
}

function FolderLogo() {
  return (
    <svg viewBox="0 0 32 30" className="w-8 h-[30px]">
      <path d="M2 4h9l2 2h16v20H2z" fill="#e6cf78" stroke="#c4a64a" />
      <path d="M5 2h8v6H5zM18 3h8v6h-8z" fill="#f7f3e2" stroke="#b9ad85" strokeWidth=".6" />
      <path d="M6 3h3v2H6z" fill="#3fa04c" /><path d="M22 3h3v3h-3z" fill="#4a8ad4" /><path d="M14 4h4v2h-4z" fill="#d4513a" />
      <path d="M1 8h30l-1 18H2z" fill="#f5e7a3" stroke="#cdb15b" />
      <path d="M7 28V18h19v10h-5v-5h-9v5z" fill="#9fd3ee" stroke="#5c9fc4" />
    </svg>
  );
}

function MediaLogo() {
  return (
    <svg viewBox="0 0 28 26" className="w-7 h-[26px]">
      <path d="M6 2h20v22H6z" fill="#4f86ad" stroke="#8cb8d4" />
      <path d="M4 2h18v22H4z" fill="#6fa4c8" stroke="#a9cde3" />
      <path d="M2 2h17v22H2z" fill="#a2c4da" stroke="#c6dfee" />
      <circle cx="12" cy="13" r="8" fill="#ef7d1c" stroke="#fbd2a6" />
      <path d="M9 8l8 5-8 5z" fill="#fff" />
    </svg>
  );
}

function ChromeLogo({ top, left, right }: { top: string; left: string; right: string }) {
  return (
    <svg viewBox="0 0 28 28" className="w-7 h-7">
      <circle cx="14" cy="14" r="13.500" fill={right} />
      <path d="M14 14L2.300 7.200A13.500 13.500 0 0 0 14 27.500L20 17.500z" fill={left} />
      <path d="M2.300 7.200A13.500 13.500 0 0 1 25.800 7.500H14L8 17z" fill={top} />
      <circle cx="14" cy="14" r="6.300" fill="#fff" />
      <circle cx="14" cy="14" r="5" fill="#4688f1" />
    </svg>
  );
}

function ExcelLogo() {
  return (
    <svg viewBox="0 0 30 28" className="w-[30px] h-7">
      <path d="M7 2h18v20H2V9q0-7 5-7z" fill="#dbe8cf" stroke="#4f9a3c" strokeWidth="1.500" />
      <path d="M6 8l22 1-1 18-24-3z" fill="#f4f8f0" stroke="#fff" />
      <path d="M21 11h6v4h-6zM21 16h5v4h-5zM20 21h6v4h-6zM13 20h5v4h-5zM6 19h5v4H6z" fill="#5a9e46" />
      <path d="M7 8h5l7 9h-6zM16 8h3l-8 9H8z" fill="#1f5d27" />
    </svg>
  );
}

function Taskbar() {
  return (
    <div className="flex items-center h-9 bg-[#1b1016] text-white">
      <button aria-label="Start" className="w-[50px] pl-[7px]"><StartOrb /></button>
      <button aria-label="Internet Explorer" className="w-[64px] flex justify-center pl-1"><IeLogo /></button>
      <button aria-label="Explorer" className="w-[54px] flex justify-center"><FolderLogo /></button>
      <button aria-label="Media Player" className="w-[62px] flex justify-center"><MediaLogo /></button>
      <button aria-label="Chrome" className="w-[56px] flex justify-center"><ChromeLogo top="#e2402f" left="#38a04e" right="#fbcd2f" /></button>
      <button aria-label="Chromium" className="w-[60px] flex justify-center"><ChromeLogo top="#4b80dc" left="#8fb4f2" right="#b4cdf8" /></button>
      <button aria-label="Excel" className="w-[55px] h-[35px] flex items-center justify-center border border-[#b5aeb1] bg-linear-to-br from-[#c5c0c2] to-[#6f686b]"><ExcelLogo /></button>
      <div className="flex items-center gap-2 ml-auto">
        <button aria-label="Show hidden icons" className="mr-1"><svg viewBox="0 0 8 5" className="w-2 h-[5px]"><path d="M4 0l4 5H0z" fill="#eee" /></svg></button>
        <svg viewBox="0 0 16 16" className="w-4 h-4" fill="#fff"><path d="M2 1h1.500v14H2zM4 3c3-2 4 0 6 0l5 1-2 2 1 3c-3 1-5-1-6-1S6 9 4 10z" /></svg>
        <svg viewBox="0 0 14 12" className="w-3.5 h-3" fill="#fff"><path d="M0 9h2v3H0zM3 7.500h2V12H3zM6 5h2v7H6zM9 2.500h2V12H9zM12 0h1v12h-1z" /></svg>
        <svg viewBox="0 0 16 16" className="w-4 h-4" fill="none"><path d="M3 3h6v10H3z" stroke="#ddd" fill="#777" /><path d="M8 6h6v3l-2 2H9zM9 3v3M13 3v3M11 11v4" stroke="#fff" strokeWidth="1.500" fill="#fff" /><path d="M2 7l7 7M9 7l-7 7" stroke="#e2231a" strokeWidth="2.500" /></svg>
      </div>
      <div className="w-20 text-center text-xs leading-4">
        <div>2:53 PM</div>
        <div>02-Oct-17</div>
      </div>
      <button aria-label="Show desktop" className="w-3 h-full border-l border-t border-[#6a6266] bg-linear-to-br from-[#544b4f] to-[#1b1016]" />
    </div>
  );
}

export default function App() {
  return (
    <div className="flex flex-col h-screen overflow-hidden bg-[#1b1016] font-[Open_Sans,sans-serif]">
      <div className="flex flex-1 min-h-0">
        <main className="relative flex flex-col flex-1 min-w-0 bg-[#c3daf3]">
          <TitleBar />
          <OfficeButton />
          <RibbonTabs />
          <Ribbon />
          <FormulaBar />
          <Worksheet />
          <SheetBar />
          <StatusBar />
        </main>
        <BackgroundEdge />
      </div>
      <Taskbar />
    </div>
  );
}
